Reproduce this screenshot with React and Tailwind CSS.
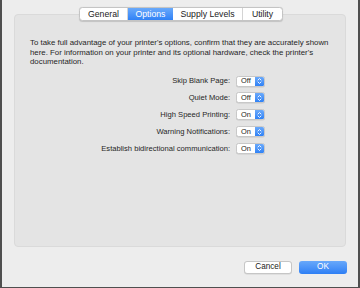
import React from 'react';

const font = { fontFamily: '"Liberation Sans", Arial, sans-serif' };

const rows = [
    ['Skip Blank Page:', 'Off'],
    ['Quiet Mode:', 'Off'],
    ['High Speed Printing:', 'On'],
    ['Warning Notifications:', 'On'],
    ['Establish bidirectional communication:', 'On'],
];

const tabs = ['General', 'Options', 'Supply Levels', 'Utility'];
const tabWidths = ['w-[47px]', 'w-[46px]', 'w-[69px]', 'w-[40px]'];

const Popup = ({ value }) => (
    <div className="flex h-[11px] w-[29px] rounded-[2.5px] border border-[#c8c8c8] bg-white overflow-hidden shadow-[0_0.5px_0.5px_rgba(0,0,0,0.12)]">
        <div className="flex-1 flex items-center pl-[4px] text-[7.4px] text-[#222] leading-none">{value}</div>
        <div className="w-[9px] bg-gradient-to-b from-[#6aa9fa] to-[#2f82f6] flex items-center justify-center">
            <svg width="5" height="8" viewBox="0 0 5 8" fill="none" stroke="white" strokeWidth="0.9" strokeLinecap="round" strokeLinejoin="round">
                <path d="M1 3 L2.5 1.5 L4 3" />
                <path d="M1 5 L2.5 6.5 L4 5" />
            </svg>
        </div>
    </div>
);

const App = () => {
    return (
        <div className="w-[360px] h-[288px] bg-[#ededed] border-x-2 border-b border-[#4f4f4f] flex flex-col text-[#262626]" style={font}>
            {/* tab bar */}
            <div className="pt-[7px] flex justify-center pl-[2px] relative z-10">
                <div className="flex h-[14px] rounded-[3.5px] border border-[#c4c4c4] bg-white shadow-[0_0.5px_1px_rgba(0,0,0,0.15)] overflow-hidden">
                    {tabs.map((t, i) => (
                        <div
                            key={t}
                            className={`${tabWidths[i]} flex items-center justify-center text-[8.7px] leading-none ${i > 0 && i !== 2 ? 'border-l border-[#d4d4d4]' : ''} ${t === 'Options' ? 'bg-gradient-to-b from-[#69a9fa] to-[#2f81f6] text-white' : 'text-[#222]'}`}
                        >
                            {t}
                        </div>
                    ))}
                </div>
            </div>

            {/* group box */}
            <div className="mx-[12px] -mt-[7px] h-[233px] rounded-[4px] border border-[#dadada] bg-[#e4e4e4] pt-[23px] pl-[15px] pr-[10px]">
                <p className="text-[7.85px] leading-[9.7px]">
                    To take full advantage of your printer's options, confirm that they are accurately shown here. For information on your printer and its optional hardware, check the printer's documentation.
                </p>
                <div className="mt-[8.5px] flex flex-col gap-[5.8px]">
                    {rows.map(([label, value]) => (
                        <div key={label} className="flex items-center h-[11px]">
                            <div className="w-[206px] text-right text-[7.6px] leading-none pr-[6px]">{label}</div>
                            <Popup value={value} />
                        </div>
                    ))}
                </div>
            </div>

            {/* buttons */}
            <div className="flex justify-end gap-[7px] pr-[11px] mt-[14px]">
                <button className="w-[48px] h-[13px] rounded-[3px] border border-[#c6c6c6] bg-white text-[8.2px] leading-none text-[#222] shadow-[0_0.5px_0.5px_rgba(0,0,0,0.12)]">
                    Cancel
                </button>
                <button className="w-[48px] h-[13px] rounded-[3px] bg-gradient-to-b from-[#68a8fa] to-[#2d7ff5] text-[8.2px] leading-none text-white">
                    OK
                </button>
            </div>
        </div>
    );
};

export default App;
